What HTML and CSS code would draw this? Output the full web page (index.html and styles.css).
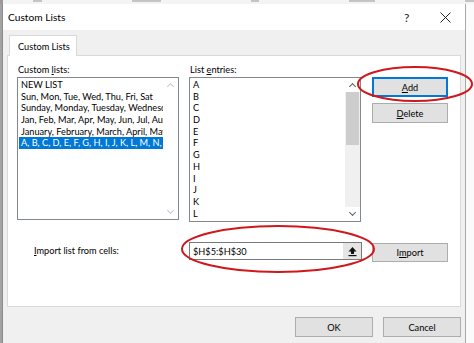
FILE: index.html
```html
<!DOCTYPE html>
<html lang="en">
<head>
  <meta charset="UTF-8" />
  <meta name="viewport" content="width=device-width, initial-scale=1.0" />
  <title>Custom Lists</title>
  <link rel="stylesheet" href="styles.css">
</head>
<body>
  <div class="sheet">
    <span class="cell" style="width:12px"></span>
    <span class="cell" style="width:40px"></span>
    <span class="cell" style="width:12px"></span>
    <span class="cell" style="width:36px"></span>
    <span class="cell" style="width:12px"></span>
  </div>

  <div class="dialog">
    <div class="titlebar">
      <span class="title">Custom Lists</span>
      <span class="help">?</span>
      <span class="close">
        <svg width="11" height="11" viewBox="0 0 11 11"><path d="M0.5 0.5 L10.5 10.5 M10.5 0.5 L0.5 10.5" stroke="#222" stroke-width="1"/></svg>
      </span>
    </div>

    <div class="content">
      <div class="tabs">
        <div class="tab">Custom Lists</div>
      </div>
      <div class="panel">
        <div class="grid">
          <div class="col">
            <div class="label">Custom <u>l</u>ists:</div>
            <div class="listbox left">
              <ul class="items">
                <li>NEW LIST</li>
                <li>Sun, Mon, Tue, Wed, Thu, Fri, Sat</li>
                <li>Sunday, Monday, Tuesday, Wednesday, Thursday, Friday, Saturday</li>
                <li>Jan, Feb, Mar, Apr, May, Jun, Jul, Aug, Sep, Oct, Nov, Dec</li>
                <li>January, February, March, April, May, June, July</li>
                <li class="selected">A, B, C, D, E, F, G, H, I, J, K, L, M, N, O</li>
              </ul>
              <div class="scrollbar off">
                <span class="arrow up"></span>
                <span class="track"></span>
                <span class="arrow down"></span>
              </div>
            </div>
          </div>

          <div class="col">
            <div class="label">List <u>e</u>ntries:</div>
            <div class="listbox right">
              <ul class="items">
                <li>A</li><li>B</li><li>C</li><li>D</li><li>E</li><li>F</li>
                <li>G</li><li>H</li><li>I</li><li>J</li><li>K</li><li>L</li>
              </ul>
              <div class="scrollbar">
                <span class="arrow up"></span>
                <span class="track"><span class="thumb"></span></span>
                <span class="arrow down"></span>
              </div>
            </div>
          </div>

          <div class="col buttons">
            <button class="btn default"><u>A</u>dd</button>
            <button class="btn"><u>D</u>elete</button>
          </div>

          <div class="import-label"><u>I</u>mport list from cells:</div>
          <div class="range">
            <span class="range-text">$H$5:$H$30</span>
            <span class="collapse">
              <svg width="11" height="11" viewBox="0 0 11 11"><path d="M5.5 1 L9.5 5.5 L7 5.5 L7 8 L4 8 L4 5.5 L1.5 5.5 Z" fill="#111"/><rect x="1.5" y="9" width="8" height="1.2" fill="#111"/></svg>
            </span>
          </div>
          <button class="btn import">I<u>m</u>port</button>
        </div>
      </div>
    </div>

    <div class="footer">
      <button class="btn wide">OK</button>
      <button class="btn wide">Cancel</button>
    </div>
  </div>

  <svg class="marks" width="474" height="343" viewBox="0 0 474 343">
    <ellipse cx="415" cy="84" rx="57" ry="17" fill="none" stroke="#d0181c" stroke-width="2"/>
    <ellipse cx="278" cy="249" rx="96" ry="23" fill="none" stroke="#d0181c" stroke-width="2"/>
  </svg>
</body>
</html>
```

FILE: styles.css
```css
body {
  margin: 0;
  width: 474px;
  height: 343px;
  overflow: hidden;
  position: relative;
  background: linear-gradient(to right, #a3a3a3 2px, #fbfbfb 2px);
  font-family: Lato, "Noto Sans", sans-serif;
  font-size: 9.2px;
  color: #000;
}
.sheet {
  height: 4px;
  display: flex;
  gap: 90px;
  padding-left: 30px;
  background: #f4f4f4;
  border-left: 3px solid #9a9a9a;
}
.cell {
  height: 2px;
  background: #c4c4c4;
}
.dialog {
  width: 462px;
  margin-left: 2px;
  border-left: 1px solid #8c8c8c;
  border-right: 1px solid #a8a8a8;
  background: #f0f0f0;
}
.titlebar {
  height: 26px;
  background: #fff;
  display: flex;
  align-items: center;
  padding-left: 5px;
  font-size: 10.2px;
}
.title {
  flex: 1;
}
.help {
  width: 36px;
  font-size: 12px;
  color: #222;
}
.close {
  width: 25px;
  display: flex;
  padding-top: 1px;
}
.content {
  padding: 5px 4px 0 4px;
}
.tabs {
  display: flex;
  padding-left: 2px;
}
.tab {
  width: 68px;
  height: 21px;
  box-sizing: border-box;
  background: #fff;
  border: 1px solid #d9d9d9;
  border-bottom: none;
  margin-bottom: -1px;
  position: relative;
  padding: 5px 0 0 8px;
  white-space: nowrap;
}
.panel {
  height: 252px;
  box-sizing: border-box;
  background: #fff;
  border: 1px solid #d9d9d9;
  padding: 6px 0 0 9px;
}
.grid {
  display: grid;
  grid-template-columns: 162px 173px 76px;
  column-gap: 10px;
  row-gap: 20px;
  align-items: start;
}
.label {
  height: 15px;
  line-height: 15px;
  padding-left: 1px;
}
.listbox {
  display: flex;
  border: 1px solid #828790;
  box-sizing: border-box;
  overflow: hidden;
}
.listbox.left {
  height: 143px;
}
.listbox.right {
  height: 145px;
  margin-right: 1px;
}
.items {
  list-style: none;
  margin: 0;
  padding: 1px 0 0 1px;
  flex: 1;
  min-width: 0;
  overflow: hidden;
}
.items li {
  line-height: 11.7px;
  height: 11.7px;
  padding-left: 2px;
  white-space: nowrap;
  overflow: hidden;
}
.items li.selected {
  background: #0078d7;
  color: #fff;
}
.scrollbar {
  width: 15px;
  display: flex;
  flex-direction: column;
  background: #fff;
}
.arrow {
  height: 14px;
  position: relative;
}
.arrow::after {
  content: "";
  position: absolute;
  left: 5px;
  width: 4px;
  height: 4px;
  border-left: 1px solid #606060;
  border-top: 1px solid #606060;
}
.arrow.up::after {
  top: 6px;
  transform: rotate(45deg);
}
.arrow.down::after {
  top: 3px;
  transform: rotate(225deg);
}
.scrollbar.off .arrow::after {
  border-color: #c8c8c8;
}
.track {
  flex: 1;
  background: #f0f0f0;
  padding: 0 1px;
}
.scrollbar.off .track {
  background: #fff;
}
.thumb {
  display: block;
  height: 53px;
  background: #cdcdcd;
}
.buttons {
  display: flex;
  flex-direction: column;
  gap: 6px;
  padding-top: 15px;
}
.btn {
  font-family: inherit;
  font-size: 9.2px;
  color: #000;
  height: 20px;
  padding: 0;
  background: #e1e1e1;
  border: 1px solid #adadad;
  box-sizing: border-box;
}
.btn.default {
  border: 2px solid #0078d7;
  box-shadow: inset 0 0 0 1px #e1e1e1;
}
.import-label {
  padding: 0 0 0 17px;
  line-height: 18px;
}
.range {
  height: 18px;
  box-sizing: border-box;
  border: 1px solid #7a7a7a;
  display: flex;
  align-items: center;
  padding-left: 3px;
}
.range-text {
  flex: 1;
}
.collapse {
  width: 18px;
  height: 16px;
  background: #e5e5e5;
  display: flex;
  align-items: center;
  justify-content: center;
}
.btn.import {
  margin-top: 1px;
  height: 19px;
}
.footer {
  height: 36px;
  display: flex;
  justify-content: flex-end;
  gap: 10px;
  padding: 10px 4px 0 0;
  box-sizing: border-box;
}
.btn.wide {
  width: 78px;
}
.marks {
  position: absolute;
  left: 0;
  top: 0;
  pointer-events: none;
}
```
